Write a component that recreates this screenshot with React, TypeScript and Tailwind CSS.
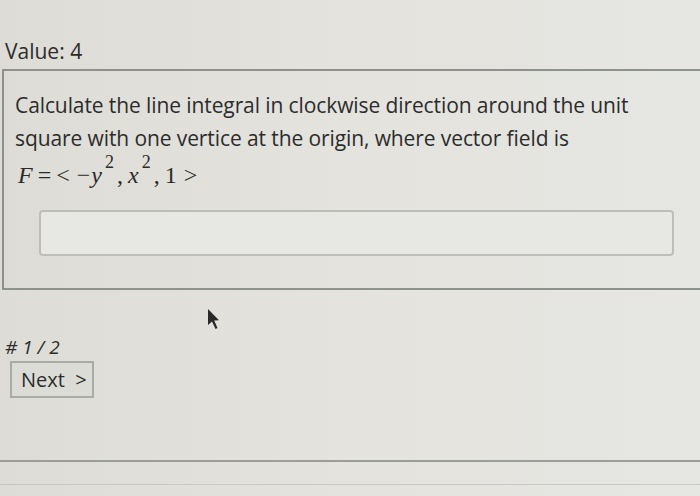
import React from 'react';

// Small black pointer, the mouse cursor caught in the photo
function Cursor() {
  return (
    <svg width="14" height="24" viewBox="0 0 14 24" className="absolute left-[206px] top-[308px] opacity-90 blur-[0.6px]">
      <path d="M2 1 L2 17 L6 13.5 L9.5 21 L11.5 20 L8.2 12.6 L13 12.2 Z" fill="#161616" />
    </svg>
  );
}

function Formula() {
  return (
    <div className="h-[40px] flex items-center pl-[3px] text-[24px] text-[#2b2b2b] font-['Liberation_Serif',serif]">
      <span className="italic">F</span>
      <span className="mx-[5px]">=</span>
      <span className="mr-[7px]">&lt;</span>
      <span className="mr-[1px]">−</span>
      <span className="italic">y</span>
      <sup className="text-[18px] -top-[13px] relative align-baseline mx-[3px]">2</sup>
      <span className="mr-[5px]">,</span>
      <span className="italic">x</span>
      <sup className="text-[18px] -top-[13px] relative align-baseline mx-[3px]">2</sup>
      <span className="mr-[5px]">,</span>
      <span>1</span>
      <span className="ml-[7px]">&gt;</span>
    </div>
  );
}

export default function App() {
  return (
    <div className="relative w-[700px] h-[496px] overflow-hidden bg-gradient-to-r from-[#dddcd6] via-[#e4e3de] to-[#e6e6e2] font-['Open_Sans',sans-serif] text-[#2c2c2c]">
      <div className="h-[69px] pt-[38px] pl-[5px] text-[21px] leading-[26px]">Value: 4</div>

      <div className="border-t-2 border-l-2 border-b-2 border-[#8d928c] ml-[2px] pl-[11px] pr-[26px] pt-[18px] pb-[32px]">
        <p className="text-[21px] leading-[33px] tracking-[-0.1px]">
          Calculate the line integral in clockwise direction around the unit
          <br />
          square with one vertice at the origin, where vector field is
        </p>
        <Formula />
        <div className="mt-[15px] ml-[24px] h-[46px] rounded-[4px] border-2 border-[#bdbeb8] bg-[#e7e7e3]" />
      </div>

      <div className="mt-[45px] pl-[5px] text-[19px] leading-[24px] italic">#&nbsp;1&nbsp;/&nbsp;2</div>
      <div className="mt-[2px] ml-[10px] w-[84px] h-[37px] flex items-center pl-[9px] border-2 border-[#a9aca6] bg-[#dcdcd7] text-[20px]">
        Next&nbsp;&nbsp;&gt;
      </div>

      <div className="mt-[62px] h-[2px] bg-[#9a9d98]" />
      <div className="mt-[22px] h-px bg-[#c8c9c4]" />

      <Cursor />
    </div>
  );
}
